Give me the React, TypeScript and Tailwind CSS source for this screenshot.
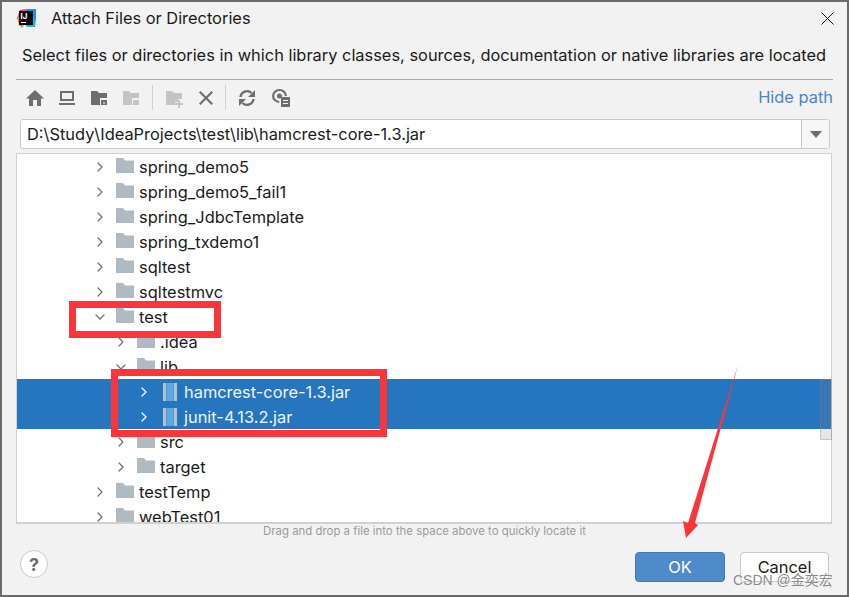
import { ChevronDown, ChevronRight } from 'lucide-react'

type Row = { name: string; depth: number; open?: boolean; jar?: boolean; selected?: boolean }

const rows: Row[] = [
  { name: 'spring_demo5', depth: 0 },
  { name: 'spring_demo5_fail1', depth: 0 },
  { name: 'spring_JdbcTemplate', depth: 0 },
  { name: 'spring_txdemo1', depth: 0 },
  { name: 'sqltest', depth: 0 },
  { name: 'sqltestmvc', depth: 0 },
  { name: 'test', depth: 0, open: true },
  { name: '.idea', depth: 1 },
  { name: 'lib', depth: 1, open: true },
  { name: 'hamcrest-core-1.3.jar', depth: 2, jar: true, selected: true },
  { name: 'junit-4.13.2.jar', depth: 2, jar: true, selected: true },
  { name: 'src', depth: 1 },
  { name: 'target', depth: 1 },
  { name: 'testTemp', depth: 0 },
  { name: 'webTest01', depth: 0 },
]

function FolderIcon() {
  return (
    <svg width="18" height="15" viewBox="0 0 18 15" className="shrink-0 translate-y-[-1px]">
      <path d="M0 0h7l2 2.500h9V15H0z" fill="#b0bac2" />
    </svg>
  )
}

function JarIcon() {
  return (
    <svg width="14" height="18" viewBox="0 0 14 18" className="shrink-0">
      <rect x="0" y="0" width="3" height="18" fill="#b7c1c9" />
      <rect x="11" y="0" width="3" height="18" fill="#b7c1c9" />
      <rect x="3" y="0" width="8" height="18" fill="#4a9fd8" />
      <path d="M4 1h6M4 3h6M4 5h6M4 7h6M4 9h6M4 11h6M4 13h6M4 15h6M4 17h6" stroke="#6db5e2" strokeWidth="1" />
    </svg>
  )
}

function TreeRow({ row }: { row: Row }) {
  const indent = row.depth === 0 ? 'pl-[75px]' : row.depth === 1 ? 'pl-[96px]' : 'pl-[119px]'
  return (
    <div
      className={`flex h-[25px] shrink-0 items-center ${indent} ${
        row.selected ? 'bg-[#2675bf] text-[#f0f5fa]' : 'text-[#1a1a1a]'
      }`}
    >
      {row.open ? (
        <ChevronDown className="h-[18px] w-[16px] shrink-0 text-[#6e6e6e]" strokeWidth={1.8} />
      ) : (
        <ChevronRight
          className={`h-[18px] w-[16px] shrink-0 ${row.selected ? 'text-white' : 'text-[#6e6e6e]'}`}
          strokeWidth={1.8}
        />
      )}
      <span className={`${row.jar ? 'ml-[11px]' : 'ml-[8px]'} flex shrink-0`}>{row.jar ? <JarIcon /> : <FolderIcon />}</span>
      <span className={`${row.jar ? 'ml-[7px]' : 'ml-[5px]'} translate-y-[1px] whitespace-nowrap`}>{row.name}</span>
    </div>
  )
}

function ToolIcon({ d, fill = '#6e6e6e' }: { d: string; fill?: string }) {
  return (
    <svg width="20" height="20" viewBox="0 0 20 20" className="shrink-0">
      <path d={d} fill={fill} fillRule="evenodd" />
    </svg>
  )
}

const FOLDER = 'M2 3h6l2 2h8v5h-7v7H2z'

export default function App() {
  return (
    <div className="relative flex h-[597px] w-[849px] flex-col overflow-hidden border-2 border-[#6b6b6b] bg-[#f2f2f2] font-['Inter',sans-serif] text-[16.4px] text-[#1a1a1a]">
      <header className="flex h-[32px] shrink-0 items-center pl-[15px] pr-[13px]">
        <svg width="20" height="20" viewBox="0 0 20 20" className="shrink-0">
          <path d="M3 2l6-1 2 5-9 9-2-5z" fill="#fc3f7d" />
          <path d="M0 9l4-2 4 9-3 4-3-3z" fill="#fd8a2e" />
          <path d="M9 1l10 0 0 11-7-2z" fill="#1c8cf0" />
          <path d="M8 16l8-7 3 3-1 7-8 0z" fill="#18b8d8" />
          <rect x="2" y="3" width="14" height="14" fill="#0a0a0a" />
          <rect x="4" y="14" width="5" height="1" fill="#fff" />
          <text x="3.500" y="11" fontSize="8" fontWeight="700" fill="#fff" fontFamily="Inter, sans-serif">IJ</text>
        </svg>
        <span className="ml-[14px]">Attach Files or Directories</span>
        <svg width="13" height="13" viewBox="0 0 13 13" className="ml-auto shrink-0">
          <path d="M0.500 0.500l12 12M12.500 0.500l-12 12" stroke="#111" strokeWidth="1" />
        </svg>
      </header>

      <p className="mt-[11px] h-[20px] shrink-0 pl-[20px] leading-[20px] whitespace-nowrap">
        Select files or directories in which library classes, sources, documentation or native libraries are located
      </p>

      <div className="ml-[14px] mr-[14px] mt-[14px] flex h-[40px] shrink-0 items-center border-t border-[#a9a9a9] pb-[4px] pl-[9px]">
        <div className="flex items-center gap-[12px]">
          <ToolIcon d="M10 2l9 8.500h-3V18h-4v-6H8v6H4v-7.500H1z" />
          <ToolIcon d="M3 3h14v10H3zM5 5v6h10V5zM2 15h16v2H2z" />
          <ToolIcon d={`${FOLDER}M12 12h6v5h-6zM14 14.500v1h2v-1z`} />
          <ToolIcon d={`${FOLDER}M12 12h6v5h-6z`} fill="#c4c4c4" />
        </div>
        <div className="ml-[11px] mr-[11px] h-[25px] w-px bg-[#d0d0d0]" />
        <div className="flex items-center gap-[12px]">
          <ToolIcon d="M2 3h6l2 2h8v6h-4v3h-3v3H2zM14 12h2v3h3v2h-3v3h-2v-3h-3v-2h3z" fill="#c4c4c4" />
          <ToolIcon d="M4.500 3L10 8.500 15.500 3 17 4.500 11.500 10 17 15.500 15.500 17 10 11.500 4.500 17 3 15.500 8.500 10 3 4.500z" />
        </div>
        <div className="ml-[9px] mr-[11px] h-[25px] w-px bg-[#d0d0d0]" />
        <div className="flex items-center gap-[14px]">
          <svg width="20" height="20" viewBox="0 0 20 20" className="shrink-0">
            <path d="M3.500 9A6.500 6.500 0 0 1 14.500 5" fill="none" stroke="#6e6e6e" strokeWidth="2.400" />
            <path d="M16.500 11A6.500 6.500 0 0 1 5.500 15" fill="none" stroke="#6e6e6e" strokeWidth="2.400" />
            <path d="M18 2v7h-7zM2 18v-7h7z" fill="#6e6e6e" />
          </svg>
          <svg width="20" height="20" viewBox="0 0 20 20" className="shrink-0">
            <path
              d="M1 8a7.500 7 0 0 1 15 0h-2.200a5.300 5 0 0 0-10.600 0 5.300 5 0 0 0 5 5v2A7.500 7 0 0 1 1 8zM6 8a2.500 2.500 0 0 1 5 0 2.500 2.500 0 0 1-5 0z"
              fill="#6e6e6e"
            />
            <path d="M10 9h9v10h-9zM12 12v1h5v-1zM12 15v1h5v-1z" fill="#6e6e6e" fillRule="evenodd" />
          </svg>
        </div>
        <a className="ml-auto text-[#4a86c7]">Hide path</a>
      </div>

      <div className="ml-[18px] mr-[17px] flex h-[30px] shrink-0 overflow-hidden rounded-[3px] border border-[#c9c9c9] bg-white">
        <div className="flex flex-1 items-center pl-[6px] whitespace-nowrap">
          D:\Study\IdeaProjects\test\lib\hamcrest-core-1.3.jar
        </div>
        <div className="flex w-[28px] items-center justify-center border-l border-[#c9c9c9] bg-[#f7f7f7]">
          <svg width="12" height="7" viewBox="0 0 12 7">
            <path d="M0 0h12L6 7z" fill="#6e6e6e" />
          </svg>
        </div>
      </div>

      <div className="ml-[14px] mr-[15px] mt-[4px] flex h-[371px] shrink-0 flex-col overflow-hidden border-t border-r border-l border-b-2 border-[#d1d1d1] bg-white">
        {rows.map((r) => (
          <TreeRow key={r.name} row={r} />
        ))}
      </div>

      <p className="h-[15px] shrink-0 text-center text-[11.4px] leading-[15px] text-[#9a9a9a]">
        Drag and drop a file into the space above to quickly locate it
      </p>

      <footer className="mt-[11px] flex shrink-0 items-start px-[18px]">
        <div className="flex h-[28px] w-[28px] items-center justify-center rounded-full border border-[#c9c9c9] bg-white text-[18px] font-bold text-[#6e6e6e]">
          ?
        </div>
        <div className="ml-auto mt-[2px] flex h-[30px] w-[90px] items-center justify-center rounded-[4px] border border-[#3f7ab8] bg-[#4f8bcb] text-white">
          OK
        </div>
        <div className="ml-[15px] mt-[2px] flex h-[30px] w-[89px] items-center justify-center rounded-[4px] border border-[#c9c9c9] bg-white">
          Cancel
        </div>
      </footer>

      {/* annotations painted over the screenshot */}
      <div className="absolute top-[299px] left-[67px] h-[37px] w-[152px] border-[7px] border-[#fc353a]" />
      <div className="absolute top-[367px] left-[109px] h-[68px] w-[276px] border-[7px] border-[#fc353a]" />
      <div className="absolute top-[377px] left-[818px] h-[61px] w-[12px] border border-[#8080804d] bg-[#80808033]" />
      <svg width="849" height="597" viewBox="0 0 849 597" className="pointer-events-none absolute top-[-2px] left-[-2px]">
        <path d="M738 365L695 523 698 525 686 538 683 521 688 523z" fill="#fc353a" />
      </svg>
      <span className="absolute top-[568px] left-[731px] text-[14px] whitespace-nowrap text-[#8a8a8a] [text-shadow:0_0_1px_#fff] font-['Liberation_Sans','Noto_Sans_CJK_SC',sans-serif]">
        CSDN @金奕宏
      </span>
    </div>
  )
}
